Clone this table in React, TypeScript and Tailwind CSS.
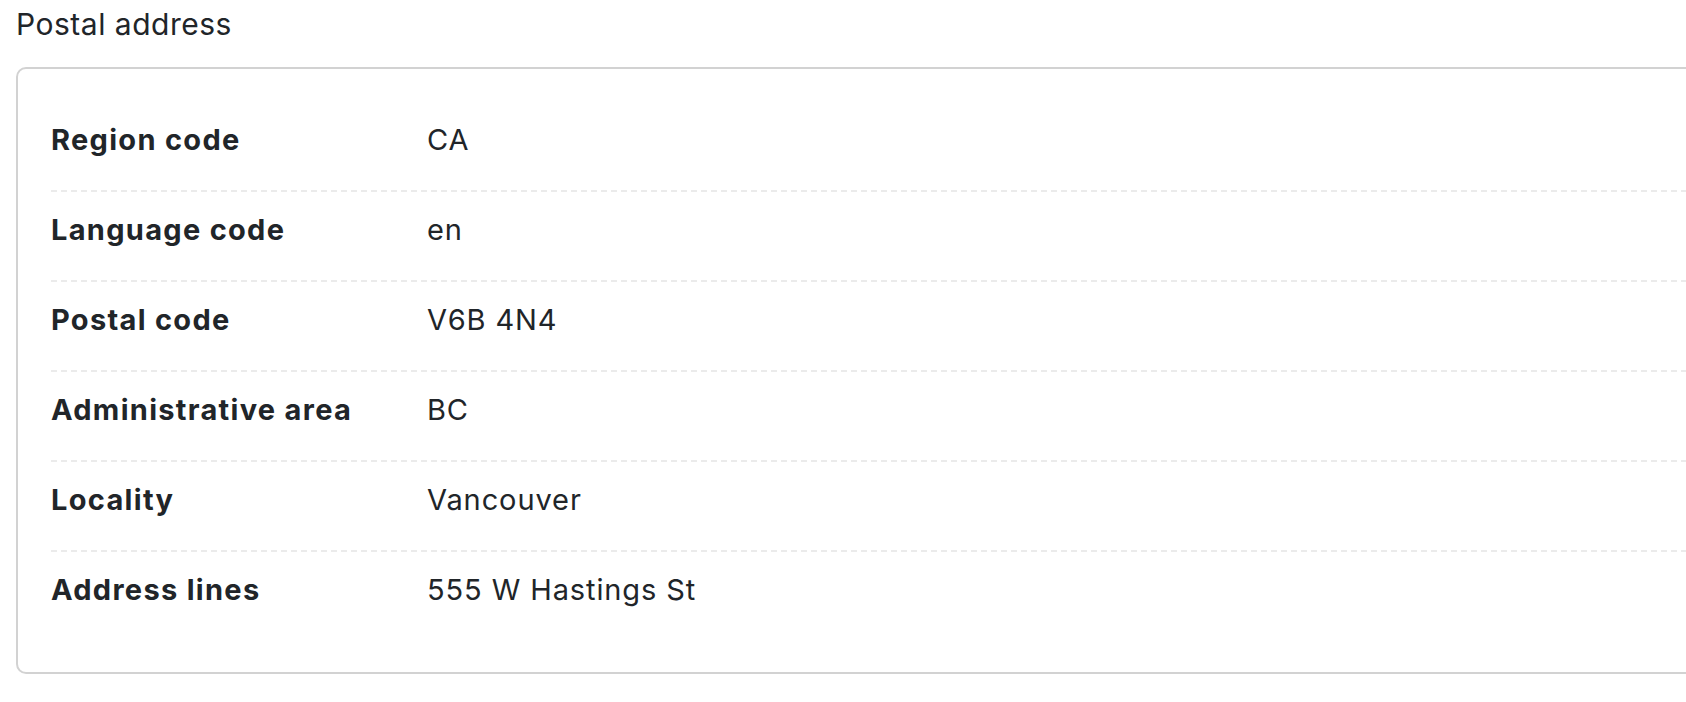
import React from "react";

const rows: [string, string][] = [
  ["Region code", "CA"],
  ["Language code", "en"],
  ["Postal code", "V6B 4N4"],
  ["Administrative area", "BC"],
  ["Locality", "Vancouver"],
  ["Address lines", "555 W Hastings St"],
];

export default function App() {
  return (
    <div className="w-full h-[702px] overflow-hidden bg-white text-[#212529] font-['Inter','Noto_Sans',sans-serif]">
      <div className="pl-4">
        <h2 className="text-[30px] leading-[45px] font-normal tracking-[0.5px] pt-[2px] mb-[20px]">Postal address</h2>
        <div className="w-[1720px] border-2 border-[#d2d2d2] rounded-[10px] pt-[33px] pb-[32px] pl-[33px]">
          {rows.map(([k, v], i) => (
            <div key={k} className="flex">
              <div className="w-full">
                <div className="flex pt-[17px] pb-[29px]">
                  <div className="w-[376px] shrink-0 text-[29px] leading-[42px] font-bold tracking-[1.3px]">{k}</div>
                  <div className="text-[29px] leading-[42px] font-normal tracking-[0.9px]">{v}</div>
                </div>
                {i < rows.length - 1 && (
                  <div className="h-[2px] w-full bg-[repeating-linear-gradient(to_right,#ebebeb_0px,#ebebeb_6px,transparent_6px,transparent_10px)]" />
                )}
              </div>
            </div>
          ))}
        </div>
      </div>
    </div>
  );
}
